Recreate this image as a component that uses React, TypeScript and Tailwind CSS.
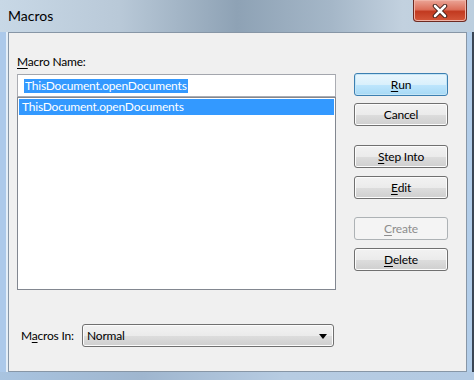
import React from "react";

const font = { fontFamily: 'Lato, "Noto Sans", "DejaVu Sans", sans-serif' };

function Btn({
  children,
  variant = "normal",
}: {
  children: React.ReactNode;
  variant?: "normal" | "default" | "disabled";
}) {
  const cls =
    variant === "default"
      ? "border-[#3c7fb1] bg-[linear-gradient(to_bottom,#eaf6fd_0%,#d9f0fc_50%,#bee6fd_51%,#a7d9f5_100%)] text-black shadow-[inset_0_0_0_1px_#c4e5f6]"
      : variant === "disabled"
      ? "border-[#adb2b5] bg-[#f4f4f4] text-[#8d8d8d]"
      : "border-[#707070] bg-[linear-gradient(to_bottom,#f2f2f2_0%,#ebebeb_50%,#dddddd_51%,#cfcfcf_100%)] text-black shadow-[inset_0_0_0_1px_#fcfcfc]";
  return (
    <div
      className={`flex h-[23px] w-[94px] items-center justify-center rounded-[3px] border text-[12px] leading-none tracking-[-0.2px] ${cls}`}
    >
      {children}
    </div>
  );
}

export default function App() {
  return (
    <div
      className="relative flex h-[380px] w-[474px] flex-col overflow-hidden bg-[linear-gradient(to_right,#c8d8e6_0%,#b9c9d8_25%,#8ea2b5_50%,#a5b7c8_70%,#c2d1df_85%,#bccede_100%)]"
      style={font}
    >
      {/* Title bar */}
      <div className="relative flex h-[32px] shrink-0 items-start">
        <span className="ml-[8px] mt-[7px] text-[14px] leading-[18px] text-black">Macros</span>
        <div className="absolute left-[413px] top-0 flex h-[22px] w-[54px] items-center justify-center rounded-b-[4px] border border-t-0 border-[#6d2a22] bg-[linear-gradient(to_bottom,#eba597_0%,#dc6f5a_45%,#c23a20_55%,#d4573a_100%)] shadow-[inset_0_0_0_1px_#f0b3a6]">
          <svg width="16" height="14" viewBox="0 0 16 14">
            <path
              d="M3 2 L13 12 M13 2 L3 12"
              stroke="#3a1a14"
              strokeWidth="4.5"
              strokeLinecap="round"
            />
            <path
              d="M3 2 L13 12 M13 2 L3 12"
              stroke="#ffffff"
              strokeWidth="2.6"
              strokeLinecap="round"
            />
          </svg>
        </div>
      </div>

      {/* Body row with side frames */}
      <div className="flex h-[340px] shrink-0">
        <div className="w-[6px] bg-[#acc9ea]" />
        <div className="w-[2px] bg-[#e4eef8]" />
        {/* Inner panel */}
        <div className="flex h-[340px] w-[459px] border border-[#8796a6] bg-[#f0f0f0] text-[12px] tracking-[-0.2px] text-black">
          {/* Left column */}
          <div className="ml-[8px] flex w-[319px] flex-col pt-[21px]">
            <div className="mb-[4px] h-[16px] leading-[16px]">
              <span className="underline underline-offset-2">M</span>acro Name:
            </div>
            <div className="flex h-[23px] items-center border border-[#abadb3] border-t-[#a3a6ad] bg-white pl-[6px]">
              <span className="bg-[#3399ff] px-[1px] leading-[14px] text-white">
                ThisDocument.openDocuments
              </span>
            </div>
            <div className="h-[193px] border border-[#828790] bg-white p-[1px]">
              <div className="h-[16px] bg-[#3399ff] pl-[3px] leading-[16px] text-white">
                ThisDocument.openDocuments
              </div>
            </div>
            <div className="mt-[34px] flex h-[23px] items-center">
              <span className="ml-[4px] w-[61px]">
                M<span className="underline underline-offset-2">a</span>cros In:
              </span>
              <div className="relative flex h-[23px] w-[252px] items-center rounded-[3px] border border-[#707070] bg-[linear-gradient(to_bottom,#f2f2f2_0%,#ebebeb_50%,#dddddd_51%,#cfcfcf_100%)] pl-[4px] shadow-[inset_0_0_0_1px_#fcfcfc]">
                Normal
                <svg
                  className="absolute right-[6px] top-[9px]"
                  width="8"
                  height="5"
                  viewBox="0 0 8 5"
                >
                  <path d="M0 0 H8 L4 5 Z" fill="#000" />
                </svg>
              </div>
            </div>
          </div>
          {/* Right column */}
          <div className="ml-[18px] flex flex-col pt-[40px]">
            <Btn variant="default">
              <span className="underline underline-offset-2">R</span>un
            </Btn>
            <div className="h-[7px]" />
            <Btn>Cancel</Btn>
            <div className="h-[19px]" />
            <Btn>
              <span className="underline underline-offset-2">S</span>tep Into
            </Btn>
            <div className="h-[8px]" />
            <Btn>
              <span className="underline underline-offset-2">E</span>dit
            </Btn>
            <div className="h-[18px]" />
            <Btn variant="disabled">
              <span className="underline underline-offset-2">C</span>reate
            </Btn>
            <div className="h-[8px]" />
            <Btn>
              <span className="underline underline-offset-2">D</span>elete
            </Btn>
          </div>
        </div>
        <div className="w-[5px] bg-[#b2cde9]" />
        <div className="w-[2px] bg-[#3b4654]" />
      </div>

      {/* Bottom frame */}
      <div className="flex-1 bg-[linear-gradient(to_right,#a9c4e0,#9fb6cf_30%,#b7cce2_60%,#b3cae3)]" />
    </div>
  );
}
